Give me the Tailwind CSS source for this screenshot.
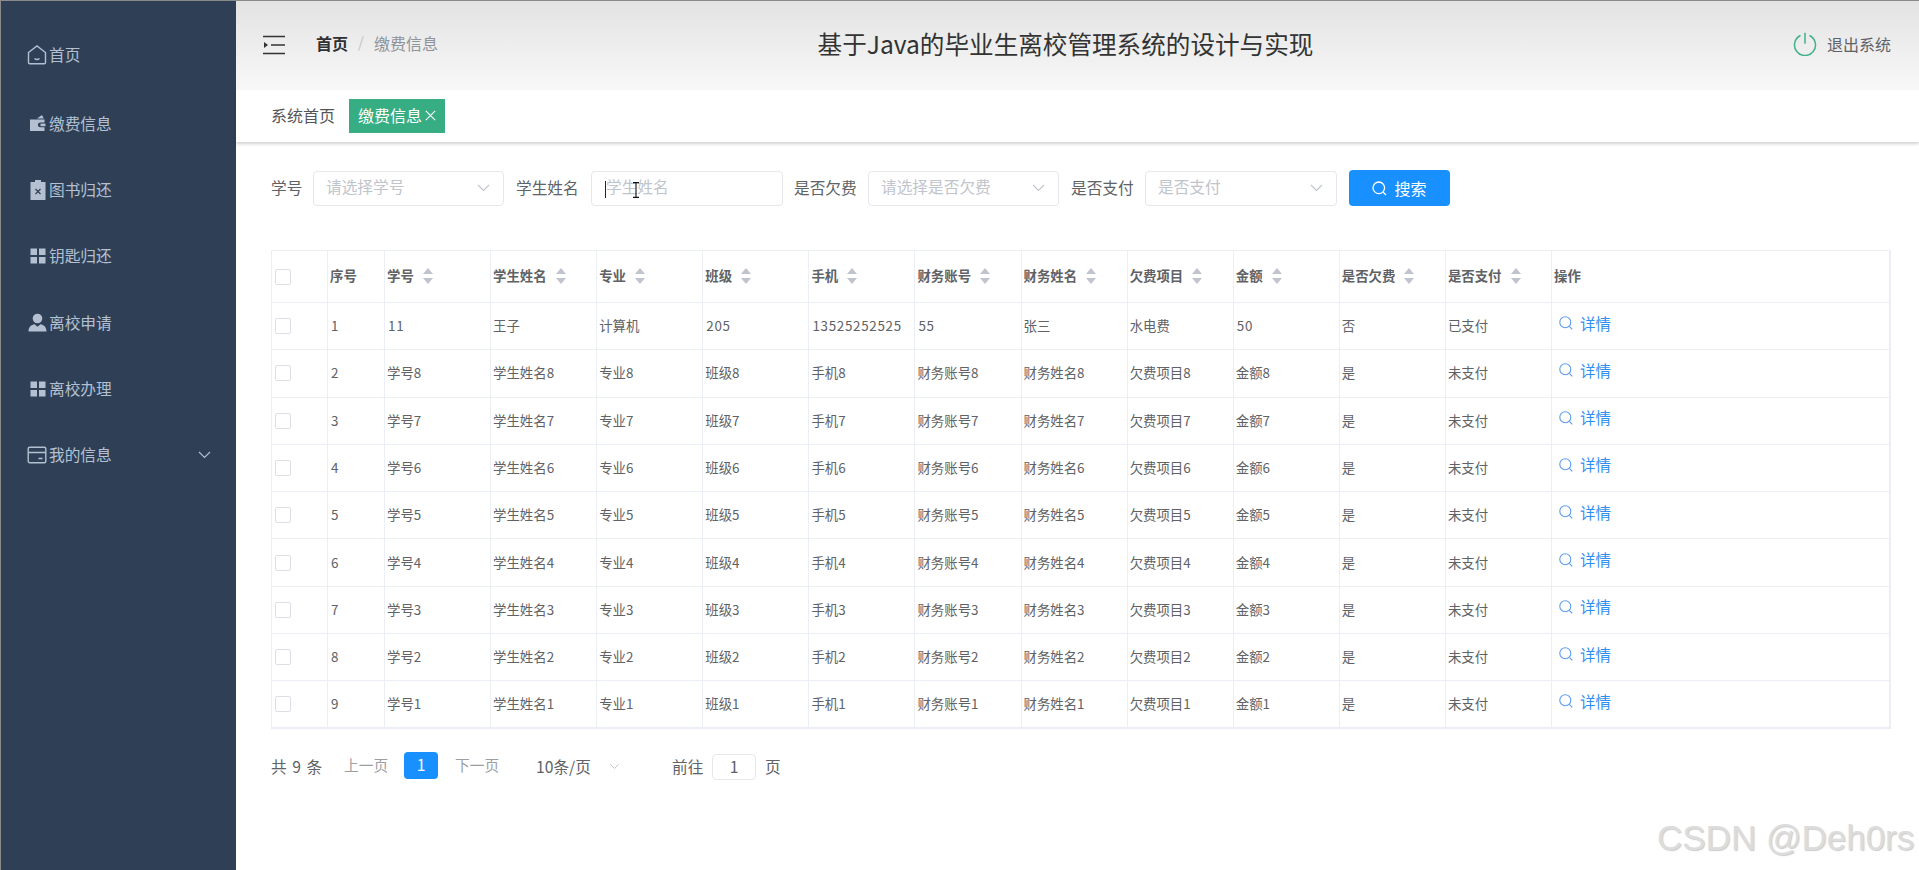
<!DOCTYPE html>
<html lang="zh-CN">
<head>
    <meta charset="UTF-8">
    <title>基于Java的毕业生离校管理系统的设计与实现</title>
    <script src="https://cdn.jsdelivr.net/npm/@tailwindcss/browser@4"></script>
</head>
<body class="h-[870px] w-[1919px] overflow-hidden bg-white border-t border-[#8a8a8a] font-['Noto_Sans_CJK_SC','Liberation_Sans',sans-serif] text-[#606266] relative">
<div class="flex h-[869px]">

    <!-- Sidebar -->
    <aside class="w-[236px] shrink-0 h-full bg-[#2f4056] border-l border-[#8a8a8a] pt-[21px] text-[15.700px] text-[#b4c0d2]">
        <a class="flex items-center h-[66.300px] mb-[2px] pl-[26px] gap-[2px]">
            <svg class="w-[20px] h-[20px]" viewBox="0 0 20 20" fill="none" stroke="#b4c0d2" stroke-width="1.400"><path d="M1.500 7.500 10 1l8.500 6.500v10a1.300 1.300 0 0 1-1.300 1.300H2.800a1.300 1.300 0 0 1-1.300-1.300z"/><path d="M7.500 13.500c1.500 1.200 3.500 1.200 5 0"/></svg>
            <span>首页</span>
        </a>
        <a class="flex items-center h-[66.300px] pl-[28px] gap-[2px]">
            <svg class="w-[18px] h-[18px]" viewBox="0 0 18 18" fill="#b4c0d2"><path d="M8 4.500 13 1l1.800 3.500z"/><path d="M1 5.500h14.500v3h-4.200a2.400 2.400 0 0 0 0 4.800h4.200v3.700H1z"/><path d="M11.500 9.600h5v2.600h-5z"/></svg>
            <span>缴费信息</span>
        </a>
        <a class="flex items-center h-[66.300px] pl-[28px] gap-[2px]">
            <svg class="w-[18px] h-[20px]" viewBox="0 0 18 20" fill="#b4c0d2"><path d="M6 0h6v2h4.500v18H1.500V2H6z"/><path d="m6.500 9 5 5m0-5-5 5" stroke="#2f4056" stroke-width="1.200"/></svg>
            <span>图书归还</span>
        </a>
        <a class="flex items-center h-[66.300px] pl-[28px] gap-[2px]">
            <svg class="w-[18px] h-[18px]" viewBox="0 0 18 18" fill="#b4c0d2"><path d="M1.500 1.500h6.500v6.500H1.500zM10 1.500h6.500v6.500H10zM1.500 10h6.500v6.500H1.500zM10 10h6.500v6.500H10z"/></svg>
            <span>钥匙归还</span>
        </a>
        <a class="flex items-center h-[66.300px] pl-[27px] gap-[2px]">
            <svg class="w-[19px] h-[19px]" viewBox="0 0 19 19" fill="#b4c0d2"><circle cx="9.500" cy="5.500" r="4.800"/><path d="M.5 18.500c0-4.500 3-6.800 6-7.200l3 2.500 3-2.500c3 .4 6 2.700 6 7.200z"/></svg>
            <span>离校申请</span>
        </a>
        <a class="flex items-center h-[66.300px] pl-[28px] gap-[2px]">
            <svg class="w-[18px] h-[18px]" viewBox="0 0 18 18" fill="#b4c0d2"><path d="M1.500 1.500h6.500v6.500H1.500zM10 1.500h6.500v6.500H10zM1.500 10h6.500v6.500H1.500zM10 10h6.500v6.500H10z"/></svg>
            <span>离校办理</span>
        </a>
        <a class="flex items-center h-[66.300px] pl-[26px] gap-[2px]">
            <svg class="w-[20px] h-[20px]" viewBox="0 0 20 20" fill="none" stroke="#b4c0d2" stroke-width="1.400"><rect x="1.200" y="2.200" width="17.600" height="15.600" rx="1.500"/><path d="M1.200 7.500h17.600M11.500 13.500h4"/></svg>
            <span>我的信息</span>
            <svg class="w-[13px] h-[8px] ml-[84px]" viewBox="0 0 13 8" fill="none" stroke="#b4c0d2" stroke-width="1.100"><path d="m1 1 5.500 5.500L12 1"/></svg>
        </a>
    </aside>

    <div class="flex-1 min-w-0 flex flex-col">
        <!-- Header -->
        <header class="h-[89px] shrink-0 bg-gradient-to-b from-[#e3e3e3] to-[#f8f8f8] relative flex items-center pl-[27px] pr-[28px] pb-[4px]">
            <svg class="w-[22px] h-[20px] mt-[2px] mr-[31px]" viewBox="0 0 22 20" fill="none" stroke="#333" stroke-width="1.400"><path d="M0 1.500h22M8 10h14M0 18.500h22"/><path d="M1 7v6l4-3z" fill="#333" stroke="none"/></svg>
            <span class="text-[16px] font-bold text-[#303133] pb-[2px]">首页</span>
            <span class="text-[15px] text-[#c0c4cc] mx-[10px] pb-[2px]">/</span>
            <span class="text-[16px] text-[#8f9399] pb-[2px]">缴费信息</span>
            <h1 class="flex-1 text-center text-[24.600px] text-[#333] pl-[6px] pr-[106px] font-normal">基于Java的毕业生离校管理系统的设计与实现</h1>
            <svg class="w-[24px] h-[24px] mr-[10px]" viewBox="0 0 24 24" fill="none" stroke="#42b28a" stroke-width="1.500"><path d="M7.500 3.500a10.500 10.500 0 1 0 9 0"/><path d="M12 0.800v11"/></svg>
            <span class="text-[16px] text-[#606266]">退出系统</span>
        </header>

        <!-- Tabs -->
        <div class="h-[52px] shrink-0 bg-white shadow-[0_2px_3px_rgba(0,0,0,0.18)] flex items-center pl-[35px] pb-[1px] gap-[14px] text-[16px] z-10">
            <span class="text-[#555] pb-[2px]">系统首页</span>
            <span class="h-[34px] w-[96px] bg-[#36ad82] text-white flex items-center pl-[9px] pb-[2px]">缴费信息<svg class="w-[11px] h-[11px] ml-[3px] mt-[2px]" viewBox="0 0 11 11" fill="none" stroke="#fff" stroke-width="1.100"><path d="m.8.8 9.400 9.400m0-9.400L.8 10.200"/></svg></span>
        </div>

        <main class="flex-1 pl-[35px] pr-[30px] relative">
            <!-- Filters -->
            <form class="flex items-center h-[36px] mt-[28px] text-[15.700px]">
                <label class="w-[42px]">学号</label>
                <div class="w-[191px] h-[35px] mt-[1px] border border-[#e6e8ee] rounded flex items-center justify-between pl-[12px] pr-[13px] text-[#c0c4cc]"><span class="pb-[3px]">请选择学号</span><svg class="w-[13px] h-[8px] mb-[2px]" viewBox="0 0 13 8" fill="none" stroke="#c0c4cc" stroke-width="1.100"><path d="m1 1 5.500 5.500L12 1"/></svg></div>
                <label class="ml-[12px] w-[75px]">学生姓名</label>
                <div class="w-[192px] h-[35px] mt-[1px] border border-[#e6e8ee] rounded flex items-center pl-[14px] text-[#c0c4cc]"><span class="pb-[3px]">学生姓名</span></div>
                <label class="ml-[11px] w-[74px]">是否欠费</label>
                <div class="w-[191px] h-[35px] mt-[1px] border border-[#e6e8ee] rounded flex items-center justify-between pl-[12px] pr-[13px] text-[#c0c4cc]"><span class="pb-[3px]">请选择是否欠费</span><svg class="w-[13px] h-[8px] mb-[2px]" viewBox="0 0 13 8" fill="none" stroke="#c0c4cc" stroke-width="1.100"><path d="m1 1 5.500 5.500L12 1"/></svg></div>
                <label class="ml-[12px] w-[74px]">是否支付</label>
                <div class="w-[192px] h-[35px] mt-[1px] border border-[#e6e8ee] rounded flex items-center justify-between pl-[12px] pr-[13px] text-[#c0c4cc]"><span class="pb-[3px]">是否支付</span><svg class="w-[13px] h-[8px] mb-[2px]" viewBox="0 0 13 8" fill="none" stroke="#c0c4cc" stroke-width="1.100"><path d="m1 1 5.500 5.500L12 1"/></svg></div>
                <button type="button" class="ml-[12px] w-[101px] h-[36px] rounded bg-[#1890ff] text-white text-[16px] flex items-center justify-center gap-[7px]">
                    <svg class="w-[15px] h-[15px]" viewBox="0 0 15 15" fill="none" stroke="#fff" stroke-width="1.300"><circle cx="6.800" cy="6.800" r="5.800"/><path d="m11 11 3 3"/></svg>搜索
                </button>
            </form>

            <!-- Table, rows are filled in below -->
            <table class="table-fixed border-collapse w-[1618px] mt-[44px] text-[13.400px] border-b-2 border-b-[#ebeef5] border-r-2 border-r-[#ebeef5]">
                <colgroup id="cols"></colgroup>
                <thead><tr id="head" class="h-[52px]"></tr></thead>
                <tbody id="rows"></tbody>
            </table>

            <!-- Pagination -->
            <div class="flex items-center h-[28px] mt-[22px] text-[15.700px]">
                <span class="w-[73px] pt-[3px] [word-spacing:2px]">共 9 条</span>
                <span class="w-[60px] text-[#9b9ea3] text-[14.700px] pb-[1px]">上一页</span>
                <span class="w-[34px] h-[27px] rounded-sm bg-[#1890ff] text-white flex items-center justify-center">1</span>
                <span class="w-[98px] pl-[17px] text-[#9b9ea3] text-[14.700px] pb-[1px]">下一页</span>
                <span class="w-[74px] pt-[3px]">10条/页</span>
                <svg class="w-[9px] h-[6px] mt-[3px]" viewBox="0 0 9 6" fill="none" stroke="#c0c4cc"><path d="m.5.5 4 4 4-4"/></svg>
                <span class="ml-[53px] w-[40px] pt-[3px]">前往</span>
                <span class="w-[44px] h-[26px] mt-[3px] border border-[#e6e8ee] rounded flex items-center justify-center">1</span>
                <span class="ml-[9px] pt-[3px]">页</span>
            </div>
        </main>
    </div>
</div>

<!-- Text cursor over the name input -->
<div class="absolute left-[605px] top-[180px] w-px h-[17px] bg-[#222]"></div>
<svg class="absolute left-[632px] top-[181px] w-[8px] h-[16px]" viewBox="0 0 8 16" fill="none" stroke="#111" stroke-width="1.100"><path d="M1 .6h6M4 .6v14.800M1 15.400h6"/></svg>

<!-- Watermark -->
<div class="absolute left-[1657px] top-[815px] text-[35px] leading-[44px] font-['Liberation_Sans',sans-serif] text-[#dcdcdc] [text-shadow:1px_1px_1px_#cccccc] whitespace-nowrap">CSDN @Deh0rs</div>

<script>
    var cell = 'border border-[#ebeef5] pl-[2px] pr-[3px] overflow-hidden whitespace-nowrap text-left';
    var box = '<span class="block ml-[1px] w-[16px] h-[16px] border border-[#dcdfe6] rounded-[2px]"></span>';
    var caret = '<svg class="inline-block w-[10px] h-[16px] ml-[9px] align-[-3px]" viewBox="0 0 10 16" fill="#c0c4cc"><path d="M5 0l5 6H0zM0 10h10l-5 6z"/></svg>';
    var names = ['学号', '学生姓名', '专业', '班级', '手机', '财务账号', '财务姓名', '欠费项目', '金额', '是否欠费', '是否支付'];

    var widths = [56, 57];
    names.forEach(function () { widths.push(106.1); });
    widths.push(338);
    document.getElementById('cols').innerHTML = widths.map(function (w) {
        return '<col style="width:' + w + 'px">';
    }).join('');

    var text = function (v) {
        // digits run a little wider in the reference
        if (/^\d+$/.test(v)) return '<span class="block pb-[2px] pl-[1px] tracking-[0.7px]">' + v + '</span>';
        return '<span class="block pb-[2px]">' + v + '</span>';
    };

    var head = '<th class="' + cell + ' font-normal">' + box + '</th><th class="' + cell + ' font-bold">' + text('序号') + '</th>';
    names.forEach(function (n) { head += '<th class="' + cell + ' font-bold">' + text(n + caret) + '</th>'; });
    head += '<th class="' + cell + ' font-bold">' + text('操作') + '</th>';
    document.getElementById('head').innerHTML = head;

    var data = [['11', '王子', '计算机', '205', '13525252525', '55', '张三', '水电费', '50', '否', '已支付']];
    for (var n = 8; n >= 1; n--) {
        var row = names.slice(0, 9).map(function (name) { return name + n; });
        row.push('是', '未支付');
        data.push(row);
    }

    var detail = '<span class="flex items-center gap-[7px] pl-[5px] pb-[6px] text-[15.500px] text-[#2f8ff0]">'
        + '<svg class="w-[14px] h-[14px]" viewBox="0 0 14 14" fill="none" stroke="#5b9bf0" stroke-width="1.100"><circle cx="6.300" cy="6.300" r="5.500"/><path d="m10.300 10.300 3 3"/></svg>详情</span>';
    document.getElementById('rows').innerHTML = data.map(function (row, i) {
        var tds = '<td class="' + cell + '">' + box + '</td><td class="' + cell + '">' + text(String(i + 1)) + '</td>';
        row.forEach(function (v) { tds += '<td class="' + cell + '">' + text(v) + '</td>'; });
        return '<tr class="h-[47.300px]">' + tds + '<td class="' + cell + '">' + detail + '</td></tr>';
    }).join('');
</script>
</body>
</html>
